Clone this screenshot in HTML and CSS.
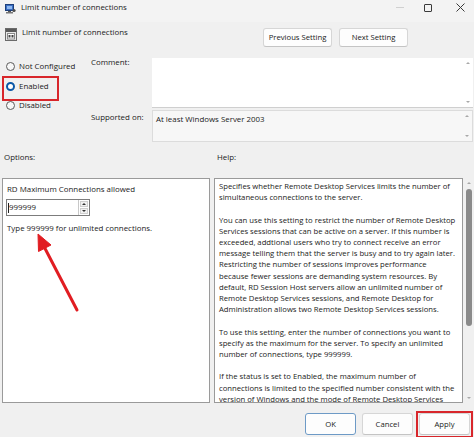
FILE: index.html
```html
<!DOCTYPE html>
<html lang="en">
<head>
<meta charset="utf-8">
<title>Limit number of connections</title>
<link rel="stylesheet" href="styles.css">
</head>
<body>
<div class="window">
  <div class="titlebar">
    <svg class="app-icon" width="11" height="10" viewBox="0 0 11 10">
      <rect x="0.5" y="0.5" width="8" height="6" fill="#3a6fc4" stroke="#1d3f7a"/>
      <rect x="2" y="2" width="5" height="3" fill="#8fb8ef"/>
      <rect x="3" y="7" width="3" height="1" fill="#555"/>
      <rect x="1" y="8" width="7" height="1.5" fill="#777"/>
      <circle cx="9" cy="6.5" r="1.6" fill="#4d4d4d"/>
    </svg>
    <span class="title">Limit number of connections</span>
    <div class="controls">
      <span class="ctl-min"></span>
      <span class="ctl-max"></span>
      <svg class="ctl-close" width="9" height="9" viewBox="0 0 9 9"><path d="M0.5 0.5 L8.5 8.5 M8.5 0.5 L0.5 8.5" stroke="#3a3a3a" stroke-width="1"/></svg>
    </div>
  </div>

  <div class="header">
    <svg class="setting-icon" width="12" height="13" viewBox="0 0 12 13">
      <rect x="0.5" y="0.5" width="11" height="12" fill="#e8e8e8" stroke="#6b6b6b"/>
      <rect x="1" y="1" width="10" height="3" fill="#5a5a5a"/>
      <rect x="2.5" y="5.5" width="7" height="5.5" fill="#fff" stroke="#8a8a8a"/>
      <rect x="3.5" y="7" width="2" height="2.5" fill="#444"/>
      <rect x="6.5" y="7" width="2" height="2.5" fill="#444"/>
    </svg>
    <span class="setting-name">Limit number of connections</span>
    <div class="nav">
      <button class="btn nav-btn">Previous Setting</button>
      <button class="btn nav-btn">Next Setting</button>
    </div>
  </div>

  <div class="config">
    <div class="radios">
      <div class="radio-row"><span class="radio"></span><span>Not Configured</span></div>
      <div class="radio-row marked"><span class="radio checked"></span><span>Enabled</span></div>
      <div class="radio-row"><span class="radio"></span><span>Disabled</span></div>
    </div>
    <div class="field-label comment-label">Comment:</div>
    <div class="box comment-box">
      <div class="box-body"></div>
      <div class="mini-scroll"><span class="tri-up"></span><span class="tri-down"></span></div>
    </div>
    <div class="field-label supported-label">Supported on:</div>
    <div class="box supported-box">
      <div class="box-body">At least Windows Server 2003</div>
      <div class="mini-scroll"><span class="tri-up"></span><span class="tri-down"></span></div>
    </div>
  </div>

  <div class="section-labels">
    <span class="options-label">Options:</span>
    <span class="help-label">Help:</span>
  </div>

  <div class="panels">
    <div class="options-panel">
      <div class="opt-title">RD Maximum Connections allowed</div>
      <div class="spin">
        <div class="spin-value"><span class="caret"></span>999999</div>
        <div class="spin-btns"><span class="spin-half"><span class="tri-up"></span></span><span class="spin-half"><span class="tri-down"></span></span></div>
      </div>
      <div class="opt-note">Type 999999 for unlimited connections.</div>
    </div>
    <div class="help-panel">
      <div class="help-text">
        <p>Specifies whether Remote Desktop Services limits the number of<br>simultaneous connections to the server.</p>
        <p>You can use this setting to restrict the number of Remote Desktop<br>Services sessions that can be active on a server. If this number is<br>exceeded, addtional users who try to connect receive an error<br>message telling them that the server is busy and to try again later.<br>Restricting the number of sessions improves performance<br>because fewer sessions are demanding system resources. By<br>default, RD Session Host servers allow an unlimited number of<br>Remote Desktop Services sessions, and Remote Desktop for<br>Administration allows two Remote Desktop Services sessions.</p>
        <p>To use this setting, enter the number of connections you want to<br>specify as the maximum for the server. To specify an unlimited<br>number of connections, type 999999.</p>
        <p>If the status is set to Enabled, the maximum number of<br>connections is limited to the specified number consistent with the<br>version of Windows and the mode of Remote Desktop Services</p>
      </div>
      <div class="help-scroll">
        <span class="tri-up"></span>
        <div class="track"><div class="thumb"></div></div>
        <span class="tri-down"></span>
      </div>
    </div>
  </div>

  <div class="footer">
    <button class="btn foot-btn default">OK</button>
    <button class="btn foot-btn">Cancel</button>
    <div class="apply-wrap"><button class="btn foot-btn">Apply</button></div>
  </div>

  <svg class="annotation" width="474" height="437" viewBox="0 0 474 437">
    <line x1="77" y1="310" x2="44.5" y2="247.5" stroke="#e11d22" stroke-width="3" stroke-linecap="round"/>
    <polygon points="38,234 51,245 38.5,251.5" fill="#e11d22" stroke="#e11d22" stroke-width="1" stroke-linejoin="round"/>
  </svg>
</div>
</body>
</html>
```

FILE: styles.css
```css
* { box-sizing: border-box; }

html, body {
  margin: 0;
  padding: 0;
}

body {
  width: 474px;
  height: 437px;
  overflow: hidden;
  background: #f0f0f0;
  font-family: "Open Sans", "Noto Sans", sans-serif;
  font-size: 7.7px;
  line-height: 11px;
  color: #1b1b1b;
}

.window {
  position: relative;
  width: 474px;
  height: 437px;
  background: #f0f0f0;
}

/* title bar */
.titlebar {
  height: 22px;
  display: flex;
  align-items: center;
  background: #f3f3f3;
  padding-left: 5px;
}
.app-icon { flex: none; margin-top: -5px; }
.title {
  margin-left: 5px;
  margin-top: -7px;
  font-size: 7.9px;
  color: #222;
}
.controls {
  margin-left: auto;
  display: flex;
  align-items: center;
  height: 22px;
  margin-top: -7px;
}
.ctl-min {
  width: 8px;
  height: 1px;
  background: #d0d0d0;
  margin-right: 20px;
}
.ctl-max {
  width: 8px;
  height: 8px;
  border: 1px solid #3a3a3a;
  border-radius: 1px;
  margin-right: 24px;
}
.ctl-close { margin-right: 9px; }

/* header */
.header {
  height: 35px;
  display: flex;
  align-items: flex-start;
  padding-top: 6px;
  padding-left: 5px;
}
.setting-icon { flex: none; }
.setting-name {
  margin-left: 5px;
  margin-top: -1px;
  font-size: 7.9px;
}
.nav {
  margin-left: auto;
  margin-right: 66px;
  display: flex;
  gap: 7px;
}

.btn {
  font-family: inherit;
  font-size: 7.7px;
  line-height: 11px;
  color: #1b1b1b;
  background: #fdfdfd;
  border: 1px solid #d6d6d6;
  border-bottom-color: #c4c4c4;
  border-radius: 3px;
  padding: 0;
  margin: 0;
}
.nav-btn {
  height: 19px;
  width: 69px;
}

/* config area */
.config {
  display: grid;
  grid-template-columns: 91px 61px 1fr;
  grid-template-rows: 51px 32px;
  row-gap: 2px;
}
.radios {
  grid-row: 1 / span 2;
  grid-column: 1;
  padding-left: 6px;
}
.radio-row {
  position: relative;
  height: 19.5px;
  display: flex;
  align-items: center;
  gap: 4px;
  font-size: 7.9px;
}
.radio-row.marked::after {
  content: "";
  position: absolute;
  left: -4px;
  top: -1px;
  width: 53px;
  height: 21px;
  border: 2px solid #d8262b;
}
.radio {
  width: 9px;
  height: 9px;
  border-radius: 50%;
  border: 1px solid #5b5b5b;
  background: #f7f7f7;
  flex: none;
}
.radio.checked {
  border: 2.5px solid #0a58a8;
  background: #fff;
}

.field-label {
  grid-column: 2;
  font-size: 7.9px;
}
.comment-label { grid-row: 1; padding-top: 0; }
.supported-label { grid-row: 2; padding-top: 2px; }

.box {
  grid-column: 3;
  display: flex;
  margin-right: 1px;
}
.comment-box {
  grid-row: 1;
  margin-top: 1px;
  background: #fff;
  border-bottom: 1px solid #cfcfcf;
}
.supported-box {
  grid-row: 2;
  background: #f7f7f7;
  border: 1px solid #dcdcdc;
}
.box-body {
  flex: 1;
  padding: 3px 3px;
  font-size: 7.9px;
}
.mini-scroll {
  width: 11px;
  display: flex;
  flex-direction: column;
  justify-content: space-between;
  align-items: center;
  padding: 4px 0 4px;
}

.tri-up, .tri-down {
  display: block;
  width: 0;
  height: 0;
  border-left: 2px solid transparent;
  border-right: 2px solid transparent;
}
.tri-up { border-bottom: 2px solid #a8a8a8; }
.tri-down { border-top: 2px solid #a8a8a8; }

/* section labels */
.section-labels {
  display: flex;
  margin-top: 10px;
  height: 12px;
  font-size: 7.9px;
}
.options-label { margin-left: 4px; width: 213px; }

/* panels */
.panels {
  display: flex;
  margin-top: 14px;
  padding-left: 2px;
  height: 225px;
  gap: 4px;
}
.options-panel {
  position: relative;
  width: 208px;
  background: #fff;
  border: 1px solid #9a9a9a;
  padding: 5px 4px 0 4px;
}
.opt-title { font-size: 7.9px; }
.spin {
  display: flex;
  width: 84px;
  height: 17px;
  margin-top: 4px;
  margin-left: -1px;
  border: 1px solid #7c7c7c;
  background: #fff;
}
.spin-value {
  flex: 1;
  display: flex;
  align-items: center;
  padding-left: 1px;
  font-size: 7.9px;
}
.caret {
  width: 1px;
  height: 10px;
  background: #222;
  margin-right: 0;
}
.spin-btns {
  width: 11px;
  display: flex;
  flex-direction: column;
  border-left: 1px solid #c8c8c8;
  padding: 1px;
  gap: 1px;
}
.spin-half {
  flex: 1;
  display: flex;
  align-items: center;
  justify-content: center;
  background: #f1f1f1;
  border: 1px solid #cfcfcf;
}
.spin-half .tri-up { border-bottom-color: #333; }
.spin-half .tri-down { border-top-color: #333; }
.opt-note {
  margin-top: 7px;
  font-size: 7.9px;
}

.help-panel {
  flex: 1;
  display: flex;
}
.help-text {
  flex: 1;
  background: #fff;
  border: 1px solid #9a9a9a;
  padding: 2px 4px 0 4px;
  overflow: hidden;
  white-space: nowrap;
  font-size: 7.7px;
  line-height: 11.2px;
}
.help-text p { margin: 0 0 11.2px 0; }
.help-scroll {
  width: 11px;
  display: flex;
  flex-direction: column;
  align-items: center;
  padding: 4px 0 4px;
  gap: 5px;
}
.track {
  flex: 1;
  width: 100%;
  display: flex;
  justify-content: center;
}
.thumb {
  width: 6px;
  height: 137px;
  background: #8a8a8a;
  border-radius: 3px;
}

/* footer */
.footer {
  display: flex;
  justify-content: flex-end;
  align-items: center;
  gap: 6px;
  margin-top: 10px;
  padding-right: 4px;
}
.foot-btn {
  width: 51px;
  height: 22px;
}
.foot-btn.default {
  border: 1px solid #6d9ac6;
}
.apply-wrap {
  position: relative;
  margin-left: 0;
}
.apply-wrap::after {
  content: "";
  position: absolute;
  left: -3px;
  top: -2px;
  right: -3px;
  bottom: -3px;
  border: 2px solid #d8262b;
}

.annotation {
  position: absolute;
  left: 0;
  top: 0;
  pointer-events: none;
}
```
